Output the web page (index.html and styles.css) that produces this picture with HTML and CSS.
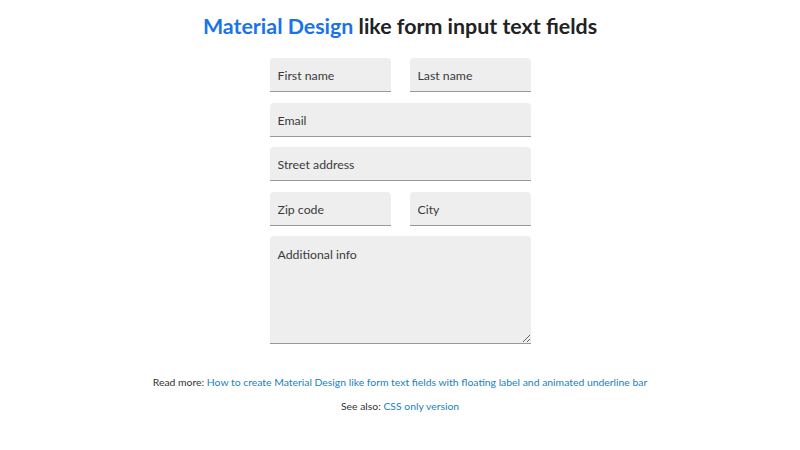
FILE: index.html
```html
<!DOCTYPE html>
<html>
<head>
<meta charset="utf-8">
<link rel="stylesheet" href="styles.css">
</head>
<body>
<h1 class="title"><span class="accent">Material Design</span> like form input text fields</h1>
<form class="form">
  <div class="row">
    <input class="field" type="text" placeholder="First name">
    <input class="field" type="text" placeholder="Last name">
  </div>
  <input class="field" type="text" placeholder="Email">
  <input class="field" type="text" placeholder="Street address">
  <div class="row">
    <input class="field" type="text" placeholder="Zip code">
    <input class="field" type="text" placeholder="City">
  </div>
  <textarea class="field area" placeholder="Additional info"></textarea>
</form>
<p class="note">Read more: <a class="link" href="#">How to create Material Design like form text fields with floating label and animated underline bar</a></p>
<p class="note">See also: <a class="link" href="#">CSS only version</a></p>
</body>
</html>
```
FILE: styles.css
```css
body {
  margin: 0;
  font-family: Lato, "Open Sans", sans-serif;
  color: #333;
  background: #fff;
}
.title {
  margin: 12px 0 0;
  text-align: center;
  font-size: 21.4px;
  font-weight: 700;
  line-height: 28px;
  color: #222;
}
.accent { color: #1a73e8; }
.form {
  width: 261px;
  margin: 18px auto 0;
  display: flex;
  flex-direction: column;
  gap: 10.5px;
}
.row {
  display: flex;
  gap: 19px;
}
.row .field { flex: 1; min-width: 0; }
.field {
  box-sizing: border-box;
  height: 34px;
  margin: 0;
  padding: 2px 8px 0;
  border: 0;
  border-bottom: 1px solid #999;
  border-radius: 4px 4px 0 0;
  background: #eee;
  font-family: inherit;
  font-size: 12.3px;
  color: #3a3a3a;
  outline: none;
}
.field::placeholder { color: #3a3a3a; opacity: 1; }
.area {
  height: 108px;
  padding: 11px 8px;
  resize: vertical;
  display: block;
}
.note {
  margin: 0;
  text-align: center;
  font-size: 10.4px;
  line-height: 14px;
  color: #333;
}
.form + .note { margin-top: 31px; }
.note + .note { margin-top: 10px; }
.link { color: #1a7fc1; text-decoration: none; }
```
